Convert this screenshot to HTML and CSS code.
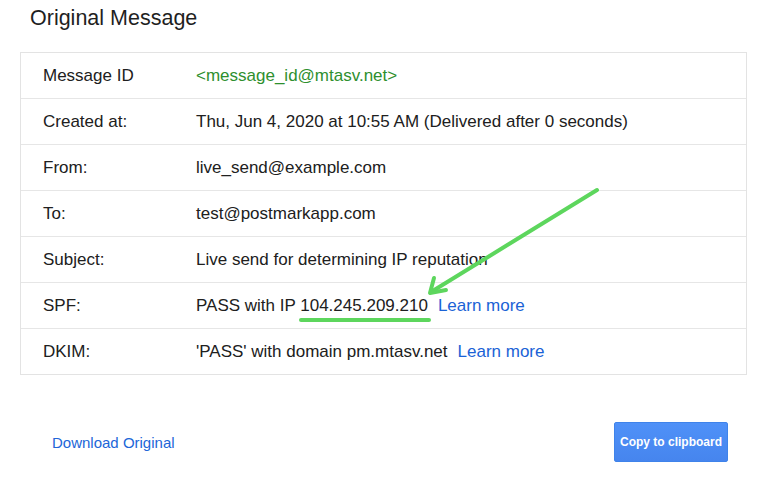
FILE: index.html
```html
<!DOCTYPE html>
<html lang="en">
<head>
<meta charset="utf-8">
<title>Original Message</title>
<link rel="stylesheet" href="styles.css">
</head>
<body>
<div class="page">
  <h1 class="title">Original Message</h1>
  <div class="details">
    <div class="row"><div class="label">Message ID</div><div class="value msgid">&lt;message_id@mtasv.net&gt;</div></div>
    <div class="row"><div class="label">Created at:</div><div class="value">Thu, Jun 4, 2020 at 10:55 AM (Delivered after 0 seconds)</div></div>
    <div class="row"><div class="label">From:</div><div class="value">live_send@example.com</div></div>
    <div class="row"><div class="label">To:</div><div class="value">test@postmarkapp.com</div></div>
    <div class="row"><div class="label">Subject:</div><div class="value">Live send for determining IP reputation</div></div>
    <div class="row"><div class="label">SPF:</div><div class="value">PASS with IP 104.245.209.210<a class="link" href="#">Learn more</a></div></div>
    <div class="row"><div class="label">DKIM:</div><div class="value">'PASS' with domain pm.mtasv.net<a class="link" href="#">Learn more</a></div></div>
  </div>
  <div class="footer">
    <a class="download" href="#">Download Original</a>
    <button class="copy" type="button">Copy to clipboard</button>
  </div>
  <svg class="annotation" width="768" height="477" viewBox="0 0 768 477" aria-hidden="true">
    <g fill="none" stroke="#5dd65d" stroke-width="4" stroke-linecap="round" stroke-linejoin="round">
      <path d="M597 190 L431 292"/>
      <path d="M434 278 L430 293 L446 290"/>
      <path d="M301 320 L429 320"/>
    </g>
  </svg>
</div>
</body>
</html>
```
FILE: styles.css
```css
* { box-sizing: border-box; }
html, body { margin: 0; padding: 0; background: #ffffff; }
body {
  font-family: "Liberation Sans", Arial, Helvetica, sans-serif;
  color: #202020;
  width: 768px;
  height: 477px;
  overflow: hidden;
}
.page { position: relative; width: 768px; height: 477px; }
.title {
  margin: 0;
  padding: 5px 0 0 30px;
  height: 52px;
  font-size: 21.5px;
  font-weight: normal;
  line-height: 26px;
  color: #1f1f1f;
}
.details {
  margin-left: 20px;
  width: 727px;
  border: 1px solid #e3e3e3;
}
.row {
  display: grid;
  grid-template-columns: 175px 1fr;
  align-items: center;
  height: 46px;
  border-bottom: 1px solid #e6e6e6;
  font-size: 17px;
}
.row:last-child { border-bottom: none; height: 45px; }
.label { padding-left: 22px; }
.msgid { color: #2e8f2e; }
.link {
  color: #1a62d6;
  text-decoration: none;
  margin-left: 10px;
}
.footer {
  display: flex;
  justify-content: space-between;
  align-items: center;
  margin-top: 47px;
  padding: 0 40px 0 52px;
}
.download {
  color: #2166d8;
  text-decoration: none;
  font-size: 15px;
}
.copy {
  width: 114px;
  height: 40px;
  padding: 0;
  border: 1px solid #3f83ea;
  border-radius: 2px;
  background: linear-gradient(#4f91f8, #4685ee);
  color: #ffffff;
  font-family: "Liberation Sans", Arial, sans-serif;
  font-size: 12px;
  font-weight: bold;
}
.annotation {
  position: absolute;
  top: 0;
  left: 0;
  pointer-events: none;
}
```
